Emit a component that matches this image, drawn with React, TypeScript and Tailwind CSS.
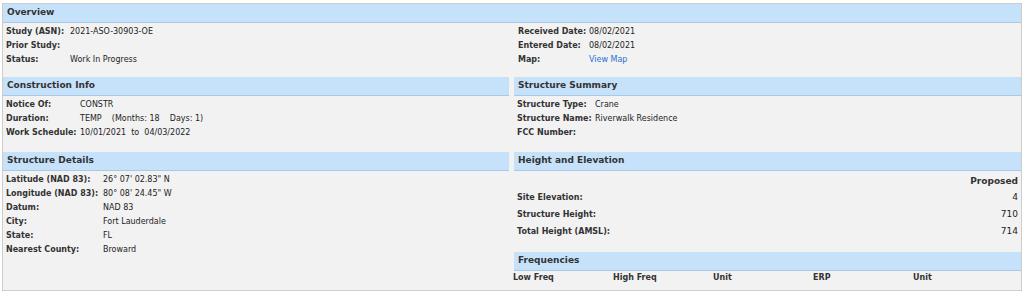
import React from "react"

const font = { fontFamily: '"DejaVu Sans", Verdana, sans-serif' }

const Header = ({ title }: { title: string }) => (
  <div className="h-[19px] bg-[#c6e2fa] border-b border-[#a9c9e6] flex items-center px-[4px] text-[9px] font-bold text-[#333]">
    {title}
  </div>
)

const Row = ({ label, value, w, link }: { label: string; value?: React.ReactNode; w: number; link?: boolean }) => (
  <div className="h-[14px] flex items-center text-[8px] text-[#222]">
    <span className="font-bold text-[#333]" style={{ width: w }}>{label}</span>
    <span className={link ? "text-[#2a6fd6]" : ""}>{value}</span>
  </div>
)

const App = () => {
  return (
    <div className="w-[1024px] h-[294px] bg-white pt-[3px] px-[2px]" style={font}>
      <div className="h-[288px] border border-[#cdcdcd] bg-[#f2f2f2] flex flex-col">
        <Header title="Overview" />
        <div className="grid grid-cols-2 gap-[6px] pt-[2px]">
          <div className="px-[3px]">
            <Row label="Study (ASN):" value="2021-ASO-30903-OE" w={64} />
            <Row label="Prior Study:" w={64} />
            <Row label="Status:" value="Work In Progress" w={64} />
          </div>
          <div className="px-[3px]">
            <Row label="Received Date:" value="08/02/2021" w={71} />
            <Row label="Entered Date:" value="08/02/2021" w={71} />
            <Row label="Map:" value="View Map" w={71} link />
          </div>
        </div>

        <div className="grid grid-cols-[506px_1fr] gap-[5px] mt-[10px]">
          <div>
            <Header title="Construction Info" />
            <div className="px-[3px] pt-[2px]">
              <Row label="Notice Of:" value="CONSTR" w={74} />
              <Row label="Duration:" value={<span className="whitespace-pre">TEMP    (Months: 18    Days: 1)</span>} w={74} />
              <Row label="Work Schedule:" value={<span className="whitespace-pre">10/01/2021  to  04/03/2022</span>} w={74} />
            </div>
          </div>
          <div>
            <Header title="Structure Summary" />
            <div className="px-[3px] pt-[2px]">
              <Row label="Structure Type:" value="Crane" w={78} />
              <Row label="Structure Name:" value="Riverwalk Residence" w={78} />
              <Row label="FCC Number:" w={78} />
            </div>
          </div>
        </div>

        <div className="grid grid-cols-[506px_1fr] gap-[5px] mt-[12px] flex-1">
          <div>
            <Header title="Structure Details" />
            <div className="px-[3px] pt-[2px]">
              <Row label="Latitude (NAD 83):" value={'26° 07\' 02.83" N'} w={97} />
              <Row label="Longitude (NAD 83):" value={'80° 08\' 24.45" W'} w={97} />
              <Row label="Datum:" value="NAD 83" w={97} />
              <Row label="City:" value="Fort Lauderdale" w={97} />
              <Row label="State:" value="FL" w={97} />
              <Row label="Nearest County:" value="Broward" w={97} />
            </div>
          </div>
          <div className="flex flex-col">
            <Header title="Height and Elevation" />
            <div className="px-[3px] text-[8px] text-[#333] font-bold">
              <div className="h-[18px] flex items-center justify-end text-[9px] pt-[3px]">Proposed</div>
              <div className="h-[17px] flex items-center justify-between">
                <span>Site Elevation:</span>
                <span className="font-normal text-[9px] text-[#222]">4</span>
              </div>
              <div className="h-[17px] flex items-center justify-between">
                <span>Structure Height:</span>
                <span className="font-normal text-[9px] text-[#222]">710</span>
              </div>
              <div className="h-[17px] flex items-center justify-between">
                <span>Total Height (AMSL):</span>
                <span className="font-normal text-[9px] text-[#222]">714</span>
              </div>
            </div>
            <div className="mt-[12px]">
              <Header title="Frequencies" />
              <div className="grid grid-cols-[100px_100px_100px_100px_100px] h-[13px] items-center text-[8px] font-bold text-[#333] -ml-[1px]">
                <span>Low Freq</span>
                <span>High Freq</span>
                <span>Unit</span>
                <span>ERP</span>
                <span>Unit</span>
              </div>
            </div>
          </div>
        </div>
      </div>
    </div>
  )
}

export default App
